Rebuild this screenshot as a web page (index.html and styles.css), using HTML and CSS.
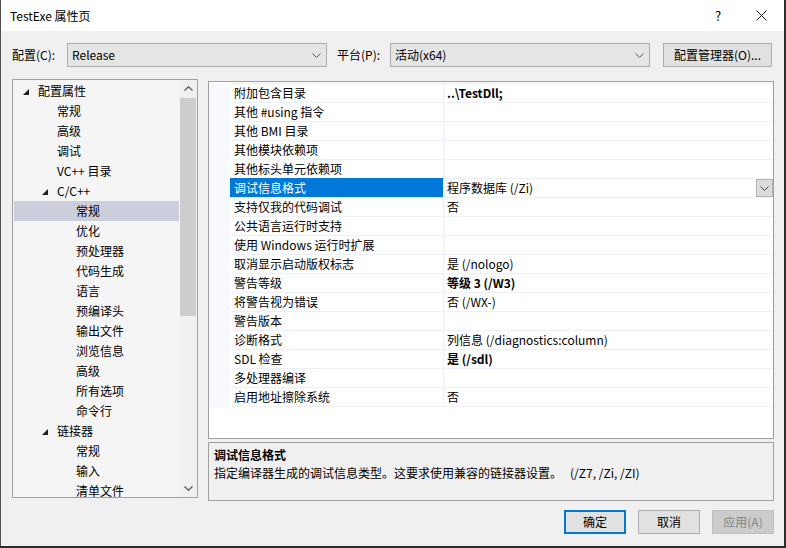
FILE: index.html
```html
<!DOCTYPE html>
<html lang="zh-CN">
<head>
<meta charset="utf-8">
<title>TestExe 属性页</title>
<link rel="stylesheet" href="styles.css">
</head>
<body>
<div class="window">
  <div class="titlebar">
    <span class="title">TestExe 属性页</span>
    <span class="help">?</span>
    <span class="close"><svg width="11" height="11" viewBox="0 0 11 11"><path d="M0.5 0.5 L10.5 10.5 M10.5 0.5 L0.5 10.5" stroke="#111" stroke-width="1" fill="none"/></svg></span>
  </div>
  <div class="dialog">
    <div class="toolbar">
      <span class="label lbl-config">配置(C):</span>
      <div class="combo"><span>Release</span><svg class="chev" width="9" height="5" viewBox="0 0 9 5"><path d="M0.5 0.5 L4.5 4.5 L8.5 0.5" stroke="#555" fill="none"/></svg></div>
      <span class="label lbl-platform">平台(P):</span>
      <div class="combo"><span>活动(x64)</span><svg class="chev" width="9" height="5" viewBox="0 0 9 5"><path d="M0.5 0.5 L4.5 4.5 L8.5 0.5" stroke="#555" fill="none"/></svg></div>
      <button class="btn btn-manager">配置管理器(O)...</button>
    </div>
    <div class="main">
      <div class="tree">
        <div class="tree-list">
          <div class="node l1"><span class="tri"></span>配置属性</div>
          <div class="node l2">常规</div>
          <div class="node l2">高级</div>
          <div class="node l2">调试</div>
          <div class="node l2">VC++ 目录</div>
          <div class="node l2"><span class="tri"></span>C/C++</div>
          <div class="node l3 selected">常规</div>
          <div class="node l3">优化</div>
          <div class="node l3">预处理器</div>
          <div class="node l3">代码生成</div>
          <div class="node l3">语言</div>
          <div class="node l3">预编译头</div>
          <div class="node l3">输出文件</div>
          <div class="node l3">浏览信息</div>
          <div class="node l3">高级</div>
          <div class="node l3">所有选项</div>
          <div class="node l3">命令行</div>
          <div class="node l2"><span class="tri"></span>链接器</div>
          <div class="node l3">常规</div>
          <div class="node l3">输入</div>
          <div class="node l3">清单文件</div>
        </div>
        <div class="vscroll">
          <div class="arrow"><svg width="9" height="5" viewBox="0 0 9 5"><path d="M0.5 4.5 L4.5 0.8 L8.5 4.5" stroke="#606060" stroke-width="1.4" fill="none"/></svg></div>
          <div class="track"><div class="thumb"></div></div>
          <div class="arrow"><svg width="9" height="5" viewBox="0 0 9 5"><path d="M0.5 0.5 L4.5 4.2 L8.5 0.5" stroke="#606060" stroke-width="1.4" fill="none"/></svg></div>
        </div>
      </div>
      <div class="right">
        <div class="grid">
          <div class="row"><div class="margin"></div><div class="name">附加包含目录</div><div class="value bold">..\TestDll;</div></div>
          <div class="row"><div class="margin"></div><div class="name">其他 #using 指令</div><div class="value"></div></div>
          <div class="row"><div class="margin"></div><div class="name">其他 BMI 目录</div><div class="value"></div></div>
          <div class="row"><div class="margin"></div><div class="name">其他模块依赖项</div><div class="value"></div></div>
          <div class="row"><div class="margin"></div><div class="name">其他标头单元依赖项</div><div class="value"></div></div>
          <div class="row sel"><div class="margin"></div><div class="name">调试信息格式</div><div class="value">程序数据库 (/Zi)<span class="dd"><svg width="9" height="5" viewBox="0 0 9 5"><path d="M0.5 0.5 L4.5 4.5 L8.5 0.5" stroke="#444" fill="none"/></svg></span></div></div>
          <div class="row"><div class="margin"></div><div class="name">支持仅我的代码调试</div><div class="value">否</div></div>
          <div class="row"><div class="margin"></div><div class="name">公共语言运行时支持</div><div class="value"></div></div>
          <div class="row"><div class="margin"></div><div class="name">使用 Windows 运行时扩展</div><div class="value"></div></div>
          <div class="row"><div class="margin"></div><div class="name">取消显示启动版权标志</div><div class="value">是 (/nologo)</div></div>
          <div class="row"><div class="margin"></div><div class="name">警告等级</div><div class="value bold">等级 3 (/W3)</div></div>
          <div class="row"><div class="margin"></div><div class="name">将警告视为错误</div><div class="value">否 (/WX-)</div></div>
          <div class="row"><div class="margin"></div><div class="name">警告版本</div><div class="value"></div></div>
          <div class="row"><div class="margin"></div><div class="name">诊断格式</div><div class="value">列信息 (/diagnostics:column)</div></div>
          <div class="row"><div class="margin"></div><div class="name">SDL 检查</div><div class="value bold">是 (/sdl)</div></div>
          <div class="row"><div class="margin"></div><div class="name">多处理器编译</div><div class="value"></div></div>
          <div class="row last"><div class="margin"></div><div class="name">启用地址擦除系统</div><div class="value">否</div></div>
        </div>
        <div class="desc">
          <div class="desc-title">调试信息格式</div>
          <div class="desc-text">指定编译器生成的调试信息类型。这要求使用兼容的链接器设置。   (/Z7, /Zi, /ZI)</div>
        </div>
      </div>
    </div>
    <div class="footer">
      <button class="btn btn-ok">确定</button>
      <button class="btn">取消</button>
      <button class="btn btn-disabled">应用(A)</button>
    </div>
  </div>
</div>
</body>
</html>
```

FILE: styles.css
```css
html, body {
  margin: 0;
  padding: 0;
  background: #2b2b2b;
}
body {
  font-family: "Noto Sans CJK SC", sans-serif;
  font-size: 12px;
  color: #000;
}
.window {
  width: 783px;
  height: 546px;
  border-left: 1px solid #505050;
  background: #f0f0f0;
  display: flex;
  flex-direction: column;
}
.titlebar {
  height: 31px;
  background: #fff;
  display: flex;
  align-items: center;
  flex-shrink: 0;
}
.title {
  margin-left: 9px;
  flex: 1;
  line-height: 16px;
}
.help {
  width: 10px;
  margin-right: 31px;
  font-size: 13px;
  line-height: 16px;
}
.close {
  width: 11px;
  height: 11px;
  margin-right: 17px;
  display: flex;
}
.dialog {
  flex: 1;
  display: flex;
  flex-direction: column;
}
.toolbar {
  display: flex;
  align-items: center;
  height: 24px;
  margin-top: 12px;
  padding-left: 11px;
}
.label {
  line-height: 16px;
}
.lbl-config {
  width: 55px;
}
.lbl-platform {
  width: 53px;
  margin-left: 10px;
}
.combo {
  width: 249px;
  height: 22px;
  border: 1px solid #adadad;
  background: #e5e5e5;
  display: flex;
  align-items: center;
  justify-content: space-between;
  padding: 0 5px 0 4px;
  box-sizing: content-box;
  line-height: 16px;
}
.chev {
  margin-top: 1px;
}
.btn {
  font-family: inherit;
  font-size: 12px;
  color: #000;
  background: #e1e1e1;
  border: 1px solid #adadad;
  padding: 0;
  height: 24px;
  line-height: 16px;
}
.btn-manager {
  margin-left: 13px;
  width: 109px;
}
.main {
  display: flex;
  margin-top: 12px;
  padding-left: 11px;
  height: 422px;
}
.tree {
  width: 184px;
  height: 417px;
  border: 1px solid #a0a0a0;
  background: #f5f5f5;
  display: flex;
  overflow: hidden;
}
.tree-list {
  flex: 1;
  padding: 1px;
  overflow: hidden;
}
.node {
  height: 20px;
  line-height: 20px;
  position: relative;
  white-space: nowrap;
}
.node.l1 { padding-left: 24px; }
.node.l2 { padding-left: 43px; }
.node.l3 { padding-left: 62px; }
.node.selected {
  background: #cccedb;
}
.tri {
  position: absolute;
  top: 8px;
  width: 0;
  height: 0;
  border-left: 6px solid transparent;
  border-bottom: 6px solid #1e1e1e;
}
.l1 .tri { left: 9px; }
.l2 .tri { left: 28px; }
.vscroll {
  width: 17px;
  background: #f0f0f0;
  display: flex;
  flex-direction: column;
}
.vscroll .arrow {
  height: 17px;
  display: flex;
  align-items: center;
  justify-content: center;
}
.track {
  flex: 1;
  padding: 1px 1px 0 0;
}
.thumb {
  height: 218px;
  background: #cdcdcd;
}
.right {
  margin-left: 10px;
  margin-top: 2px;
  display: flex;
  flex-direction: column;
}
.grid {
  width: 564px;
  height: 356px;
  border: 1px solid #a0a0a0;
  background: #fff;
  padding-top: 1px;
  box-sizing: content-box;
}
.row {
  display: grid;
  grid-template-columns: 21px 214px 1fr;
  height: 19px;
}
.row .margin {
  background: #f7f9fe;
}
.row .name, .row .value {
  border-top: 1px solid #edf0f7;
  height: 18px;
  line-height: 18px;
  white-space: nowrap;
  overflow: hidden;
}
.row.last .name, .row.last .value {
  border-bottom: 1px solid #edf0f7;
}
.row .name {
  padding-left: 4px;
  border-right: 1px solid #edf0f7;
}
.row .value {
  padding-left: 3px;
  position: relative;
}
.row.sel .name {
  background: #0078d7;
  color: #fff;
  border-top-color: #0078d7;
}
.bold {
  font-weight: bold;
}
.dd {
  position: absolute;
  right: 0;
  top: 0;
  width: 15px;
  height: 16px;
  border: 1px solid #b4b4b4;
  background: #dcdcdc;
  display: flex;
  align-items: center;
  justify-content: center;
}
.desc {
  margin-top: 3px;
  border: 1px solid #a0a0a0;
  background: #f0f0f0;
  padding: 3px 5px;
  box-sizing: border-box;
  width: 566px;
  height: 59px;
}
.desc-title {
  font-weight: bold;
  line-height: 18px;
}
.desc-text {
  line-height: 18px;
  white-space: pre;
}
.footer {
  display: flex;
  justify-content: flex-end;
  gap: 12px;
  padding-right: 10px;
  margin-top: 9px;
}
.footer .btn {
  width: 62px;
  height: 24px;
}
.btn-ok {
  border: 2px solid #0078d7;
}
.btn-disabled {
  background: #cccccc;
  border-color: #bfbfbf;
  color: #838383;
}
```
